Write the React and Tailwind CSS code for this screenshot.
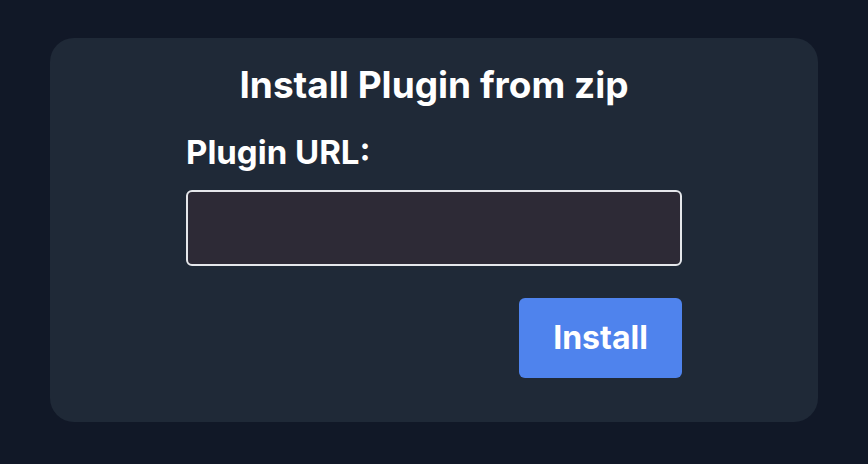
export default function App() {
  return (
    <div className="min-h-screen bg-[#111827] pt-[38px] px-[50px]" style={{ fontFamily: "Inter, 'Noto Sans', sans-serif" }}>
      <div className="w-[768px] h-[384px] rounded-[24px] bg-[#1f2937] pt-[25px] flex flex-col items-center">
        <h1 className="text-[37px] leading-[44px] font-bold text-white">Install Plugin from zip</h1>
        <div className="w-[496px] mt-[25px] flex flex-col">
          <label className="text-[33px] leading-[40px] font-bold text-white">Plugin URL:</label>
          <input className="mt-[18px] h-[76px] rounded-[6px] border-2 border-[#e5e7eb] bg-[#2d2a36] text-white px-3 outline-none" />
          <div className="flex justify-end mt-[32px]">
            <button className="w-[163px] h-[80px] rounded-[6px] bg-[#4f83ed] text-white text-[32px] leading-[40px] font-bold">Install</button>
          </div>
        </div>
      </div>
    </div>
  );
}
